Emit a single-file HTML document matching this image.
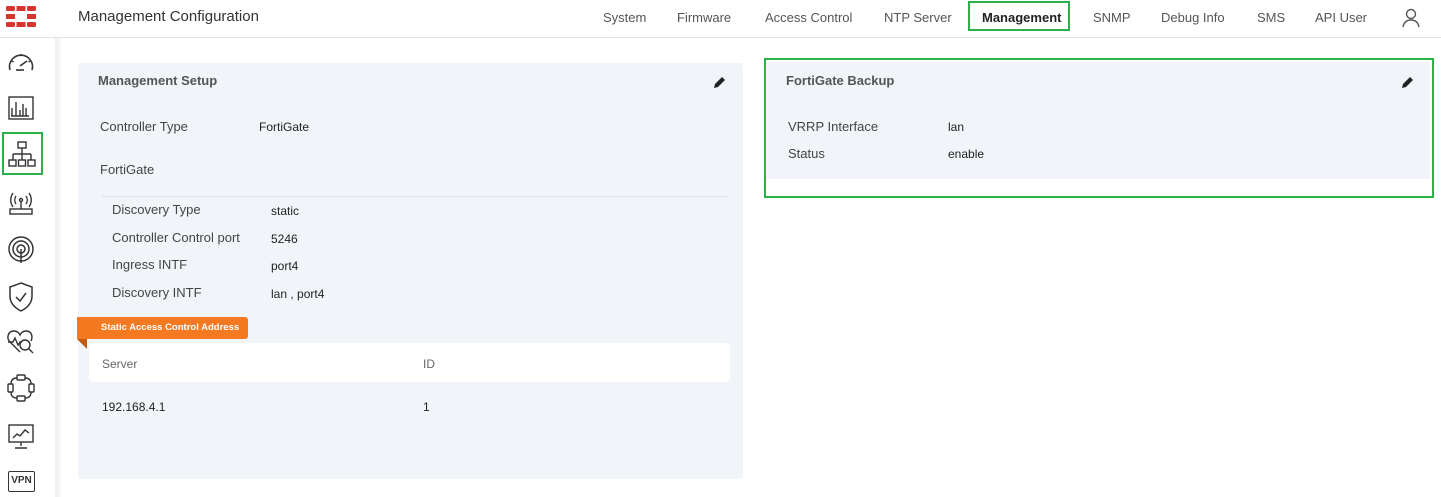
<!DOCTYPE html>
<html><head><meta charset="utf-8"><style>
*{margin:0;padding:0;box-sizing:border-box}
body{width:1441px;height:497px;overflow:hidden;background:#fff;font-family:"Liberation Sans",sans-serif;position:relative;color:#333}
.a{position:absolute;white-space:nowrap}
.nav{font-size:13px;color:#555;top:10px}
.lbl{font-size:13px;color:#444}
.val{font-size:12px;color:#222}
svg{position:absolute}
</style></head><body>
<div class="a" style="left:0;top:37px;width:1441px;height:1px;background:#e4e4e4"></div>
<div class="a" style="left:55px;top:38px;width:6px;height:459px;background:linear-gradient(90deg,#eee,#fafafa)"></div>
<svg style="left:6px;top:6px" width="30" height="21" viewBox="0 0 30 21"><g fill="#d7332f">
<rect x="0" y="0" width="9" height="5" rx="1.5"/><rect x="10.5" y="0" width="9" height="5" rx="0.5"/><rect x="21" y="0" width="9" height="5" rx="1.5"/>
<rect x="0" y="8" width="9" height="5"/><rect x="21" y="8" width="9" height="5"/>
<rect x="0" y="16" width="9" height="5" rx="1.5"/><rect x="10.5" y="16" width="9" height="5"/><rect x="21" y="16" width="9" height="5" rx="1.5"/></g></svg>
<div class="a" style="left:78px;top:8px;font-size:15px;color:#333">Management Configuration</div>
<div class="a nav" style="left:603px">System</div>
<div class="a nav" style="left:677px">Firmware</div>
<div class="a nav" style="left:765px">Access Control</div>
<div class="a nav" style="left:884px">NTP Server</div>
<div class="a" style="left:968px;top:1px;width:102px;height:30px;border:2px solid #2bb04a"></div>
<div class="a nav" style="left:982px;color:#222;font-weight:bold;font-size:13px">Management</div>
<div class="a nav" style="left:1093px">SNMP</div>
<div class="a nav" style="left:1161px">Debug Info</div>
<div class="a nav" style="left:1257px">SMS</div>
<div class="a nav" style="left:1315px">API User</div>
<svg style="left:1401px;top:8px" width="20" height="20" viewBox="0 0 20 20" fill="none" stroke="#555" stroke-width="1.4"><circle cx="10" cy="6" r="4.5"/><path d="M2 19c1-5 4-7 8-7s7 2 8 7"/></svg>
<svg style="left:7px;top:50px" width="28" height="22" viewBox="0 0 28 22" fill="none" stroke="#333" stroke-width="1.6"><path d="M3 20A11.5 11.5 0 1 1 25 20"/><path d="M14 4v2M5 11l1.5 1M23 11l-1.5 1"/><path d="M13 16l7-5"/><path d="M9 20h8"/></svg>
<svg style="left:8px;top:96px" width="26" height="24" viewBox="0 0 26 24" fill="none" stroke="#333" stroke-width="1.4"><rect x="1" y="1" width="24" height="22"/><path d="M4 20V12M8 20V6M12 20V14M15 20V8M18 20V12M21 20h-18"/></svg>
<div class="a" style="left:2px;top:132px;width:41px;height:43px;border:2px solid #2bb04a"></div>
<svg style="left:8px;top:141px" width="28" height="27" viewBox="0 0 28 27" fill="none" stroke="#333" stroke-width="1.4"><rect x="10" y="1" width="8" height="6"/><path d="M14 7v6M5 13h18M5 13v6M14 13v6M23 13v6"/><rect x="1" y="19" width="7" height="6"/><rect x="10.5" y="19" width="7" height="6"/><rect x="20" y="19" width="7" height="6"/></svg>
<svg style="left:7px;top:190px" width="28" height="26" viewBox="0 0 28 26" fill="none" stroke="#333" stroke-width="1.4"><path d="M6 3a12 12 0 0 0 0 14M22 3a12 12 0 0 1 0 14M9 6a7 7 0 0 0 0 8M19 6a7 7 0 0 1 0 8"/><circle cx="14" cy="10" r="1.5"/><path d="M14 11v8"/><rect x="3" y="19" width="22" height="5"/></svg>
<svg style="left:7px;top:235px" width="28" height="28" viewBox="0 0 28 28" fill="none" stroke="#333" stroke-width="1.5"><circle cx="14" cy="14" r="12"/><circle cx="14" cy="14" r="8"/><circle cx="14" cy="14" r="4"/><path d="M14 14v14"/></svg>
<svg style="left:8px;top:282px" width="26" height="30" viewBox="0 0 26 30" fill="none" stroke="#333" stroke-width="1.5"><path d="M13 1L24 5v9c0 7-5 12-11 15C7 26 2 21 2 14V5z"/><path d="M8 15l4 4 6-8"/></svg>
<svg style="left:6px;top:328px" width="30" height="28" viewBox="0 0 30 28" fill="none" stroke="#333" stroke-width="1.4"><path d="M14 24L4 14C0 10 2 3 8 3c3 0 5 2 6 4 1-2 3-4 6-4 6 0 7 6 5 10"/><path d="M2 14h5l2-4 3 7 2-3h2"/><circle cx="19" cy="17" r="5"/><path d="M23 21l4 4"/></svg>
<svg style="left:7px;top:374px" width="28" height="28" viewBox="0 0 28 28" fill="none" stroke="#333" stroke-width="1.4"><rect x="10" y="1" width="8" height="5" rx="1"/><rect x="10" y="22" width="8" height="5" rx="1"/><rect x="1" y="10" width="5" height="8" rx="1"/><rect x="22" y="10" width="5" height="8" rx="1"/><path d="M10 4C6 4 4 6 4 10M18 4c4 0 6 2 6 6M4 18c0 4 2 6 6 6M24 18c0 4-2 6-6 6"/></svg>
<svg style="left:8px;top:424px" width="26" height="26" viewBox="0 0 26 26" fill="none" stroke="#333" stroke-width="1.4"><rect x="1" y="1" width="24" height="17"/><path d="M5 14l4-4 3 2 5-6 4 3"/><path d="M13 18v4M7 24h12"/></svg>
<div class="a" style="left:8px;top:471px;width:27px;height:21px;border:1.5px solid #333;border-radius:2px;font-size:10px;font-weight:bold;text-align:center;line-height:18px;color:#333">VPN</div>
<div class="a" style="left:78px;top:63px;width:665px;height:416px;background:#f1f4f8;border-radius:3px"></div>
<div class="a" style="left:98px;top:73px;font-size:13px;font-weight:bold;color:#555">Management Setup</div>
<svg style="left:713px;top:76px" width="13" height="13" viewBox="0 0 13 13"><path d="M1 12l1-4 7-7 3 3-7 7z" fill="#222"/></svg>
<div class="a lbl" style="left:100px;top:119px">Controller Type</div>
<div class="a val" style="left:259px;top:120px">FortiGate</div>
<div class="a lbl" style="left:100px;top:162px">FortiGate</div>
<div class="a" style="left:102px;top:196px;width:627px;height:1px;background:#dde1e6"></div>
<div class="a lbl" style="left:112px;top:202px">Discovery Type</div><div class="a val" style="left:271px;top:204px">static</div>
<div class="a lbl" style="left:112px;top:230px">Controller Control port</div><div class="a val" style="left:271px;top:232px">5246</div>
<div class="a lbl" style="left:112px;top:257px">Ingress INTF</div><div class="a val" style="left:271px;top:259px">port4</div>
<div class="a lbl" style="left:112px;top:285px">Discovery INTF</div><div class="a val" style="left:271px;top:287px">lan , port4</div>
<div class="a" style="left:77px;top:317px;width:171px;height:22px;background:#f47920;border-radius:0 3px 3px 0;color:#fff;font-size:9.5px;font-weight:bold;line-height:22px;padding-left:24px">Static Access Control Address</div>
<svg style="left:77px;top:339px" width="10" height="10" viewBox="0 0 10 10"><path d="M0 0h10v10z" fill="#c45a10"/></svg>
<div class="a" style="left:89px;top:343px;width:641px;height:39px;background:#fff;border-radius:4px"></div>
<div class="a" style="left:102px;top:357px;font-size:12px;color:#666">Server</div>
<div class="a" style="left:423px;top:357px;font-size:12px;color:#666">ID</div>
<div class="a val" style="left:102px;top:400px">192.168.4.1</div>
<div class="a val" style="left:423px;top:400px">1</div>
<div class="a" style="left:764px;top:58px;width:670px;height:140px;border:2px solid #2bb04a"></div>
<div class="a" style="left:766px;top:62px;width:664px;height:117px;background:#f1f4f8"></div>
<div class="a" style="left:786px;top:73px;font-size:13px;font-weight:bold;color:#555">FortiGate Backup</div>
<svg style="left:1401px;top:76px" width="13" height="13" viewBox="0 0 13 13"><path d="M1 12l1-4 7-7 3 3-7 7z" fill="#222"/></svg>
<div class="a lbl" style="left:788px;top:119px">VRRP Interface</div><div class="a val" style="left:948px;top:120px">lan</div>
<div class="a lbl" style="left:788px;top:146px">Status</div><div class="a val" style="left:948px;top:147px">enable</div>
</body></html>
